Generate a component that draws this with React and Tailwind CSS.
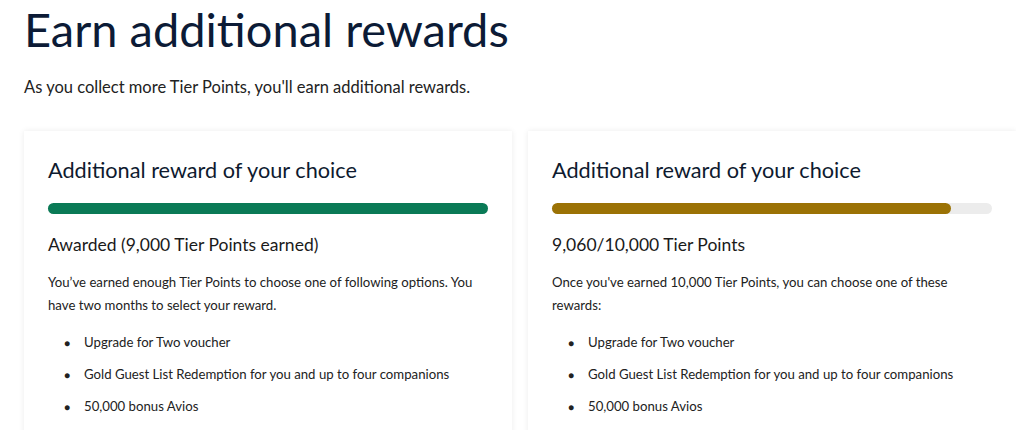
const rewards = [
  "Upgrade for Two voucher",
  "Gold Guest List Redemption for you and up to four companions",
  "50,000 bonus Avios",
];

const RewardCard = ({ status, description, percent, barColor }) => {
  return (
    <div className="w-[488px] shrink-0 bg-white px-6 pt-[25px] pb-6 shadow-[0_0_6px_rgba(0,0,0,0.08)]">
      <h2 className="text-[21.7px] leading-[28px] text-[#0e1a2f]">
        Additional reward of your choice
      </h2>
      <div className="mt-[19px] h-[11px] w-full rounded-full bg-[#ececec]">
        <div
          className="h-full rounded-full"
          style={{ width: `${percent}%`, backgroundColor: barColor }}
        />
      </div>
      <p className="mt-[18px] text-[17.5px] leading-[26px] text-[#1a1a1a]">
        {status}
      </p>
      <p className="mt-[13px] text-[13.2px] leading-[23px] text-[#222]">
        {description}
      </p>
      <ul className="mt-[10px]">
        {rewards.map((item) => (
          <li key={item} className="flex h-[32px] items-center text-[13.2px] text-[#222]">
            <span className="ml-[16px] w-[20px] text-[10px]">●</span>
            {item}
          </li>
        ))}
      </ul>
    </div>
  );
};

export default function App() {
  return (
    <div className="h-[430px] w-[1016px] overflow-hidden bg-white pl-6 font-['Lato',sans-serif]">
      <h1 className="pt-[1px] text-[47px] leading-[56px] text-[#0c1b36]">
        Earn additional rewards
      </h1>
      <p className="mt-[18px] text-[16.5px] leading-[24px] text-[#222]">
        As you collect more Tier Points, you'll earn additional rewards.
      </p>
      <div className="mt-[32px] flex gap-4">
        <RewardCard
          status="Awarded (9,000 Tier Points earned)"
          description="You’ve earned enough Tier Points to choose one of following options. You have two months to select your reward."
          percent={100}
          barColor="#0a7a56"
        />
        <RewardCard
          status="9,060/10,000 Tier Points"
          description="Once you've earned 10,000 Tier Points, you can choose one of these rewards:"
          percent={90.6}
          barColor="#9b7205"
        />
      </div>
    </div>
  );
}
